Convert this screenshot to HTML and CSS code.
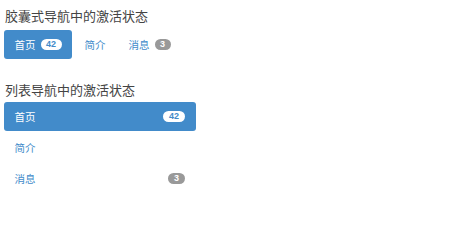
FILE: index.html
```html
<!DOCTYPE html>
<html lang="zh-CN">
<head>
<meta charset="utf-8">
<title>导航激活状态</title>
<link rel="stylesheet" href="styles.css">
</head>
<body>
<div class="page">
  <h4 class="section-title">胶囊式导航中的激活状态</h4>
  <ul class="nav pills">
    <li class="active"><a class="nav-link" href="#">首页 <span class="badge">42</span></a></li>
    <li><a class="nav-link" href="#">简介</a></li>
    <li><a class="nav-link" href="#">消息 <span class="badge">3</span></a></li>
  </ul>
  <h4 class="section-title second">列表导航中的激活状态</h4>
  <ul class="nav stacked">
    <li class="active"><a class="nav-link" href="#"><span>首页</span><span class="badge">42</span></a></li>
    <li><a class="nav-link" href="#"><span>简介</span></a></li>
    <li><a class="nav-link" href="#"><span>消息</span><span class="badge">3</span></a></li>
  </ul>
</div>
</body>
</html>
```
FILE: styles.css
```css
html, body {
  margin: 0;
  padding: 0;
  background: #fff;
}
.page {
  padding: 9px 4px;
  font-family: "Noto Sans CJK SC", "Liberation Sans", sans-serif;
}
.section-title {
  margin: 0 0 7px 1px;
  font-size: 13px;
  line-height: 14px;
  font-weight: normal;
  color: #444;
}
.section-title.second {
  margin-top: 24px;
  margin-bottom: 5px;
}
.nav {
  list-style: none;
  margin: 0;
  padding: 0;
  display: flex;
}
.pills li + li {
  margin-left: 2px;
}
.stacked {
  flex-direction: column;
  width: 192px;
}
.stacked li + li {
  margin-top: 2px;
}
.nav-link {
  display: flex;
  align-items: center;
  padding: 7px 10.5px;
  font-size: 10.5px;
  line-height: 15px;
  color: #428bca;
  text-decoration: none;
  border-radius: 3px;
}
.pills .nav-link .badge {
  margin-left: 5px;
}
.stacked .nav-link {
  justify-content: space-between;
  padding-right: 11.5px;
}
.active .nav-link {
  background: #428bca;
  color: #fff;
}
.badge {
  display: inline-block;
  font-family: "Liberation Sans", sans-serif;
  font-weight: bold;
  font-size: 9px;
  line-height: 9px;
  padding: 1px 5.5px;
  border-radius: 6px;
  background: #999;
  color: #fff;
}
.active .badge {
  background: #fff;
  color: #428bca;
}
```
